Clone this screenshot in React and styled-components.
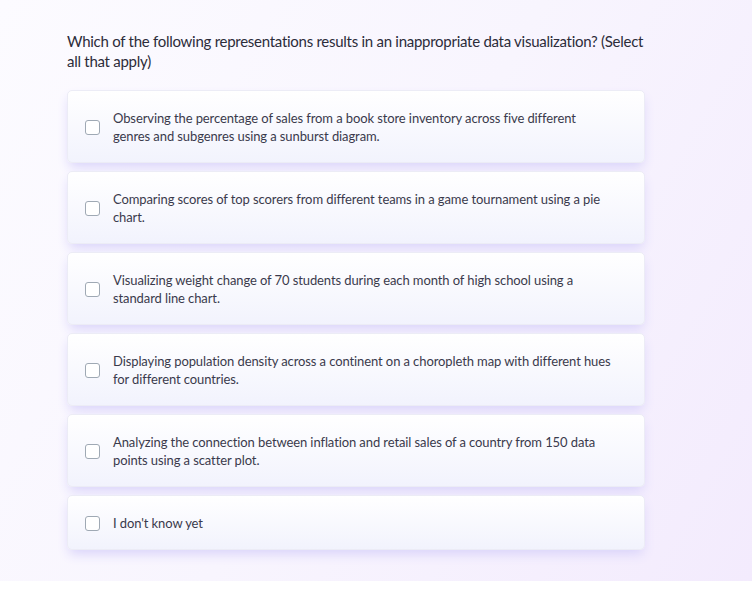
import React, { useState } from 'react'
import styled, { createGlobalStyle } from 'styled-components'

const GlobalStyle = createGlobalStyle`
  html, body {
    margin: 0;
    padding: 0;
    background: #fff;
  }
  body {
    font-family: Lato, "Noto Sans", sans-serif;
  }
`

const options = [
  'Observing the percentage of sales from a book store inventory across five different genres and subgenres using a sunburst diagram.',
  'Comparing scores of top scorers from different teams in a game tournament using a pie chart.',
  'Visualizing weight change of 70 students during each month of high school using a standard line chart.',
  'Displaying population density across a continent on a choropleth map with different hues for different countries.',
  'Analyzing the connection between inflation and retail sales of a country from 150 data points using a scatter plot.',
  "I don't know yet"
]

export default function App () {
  const [checked, setChecked] = useState({})
  const toggle = i => setChecked(c => ({ ...c, [i]: !c[i] }))

  return (
    <Page>
      <GlobalStyle />
      <Question>
        Which of the following representations results in an inappropriate data visualization? (Select all that apply)
      </Question>
      <List>
        {options.map((text, i) => (
          <Option key={i} onClick={() => toggle(i)}>
            <Box checked={!!checked[i]} />
            <Label>{text}</Label>
          </Option>
        ))}
      </List>
    </Page>
  )
}

const Page = styled.div`
  height: 581px;
  box-sizing: border-box;
  padding: 31px 0 0 67px;
  background: linear-gradient(120deg, #fcfbff 0%, #f8f5fe 50%, #f3ebfd 100%);
`

const Question = styled.div`
  width: 584px;
  font-size: 15px;
  line-height: 20px;
  letter-spacing: -0.27px;
  color: #2c2c3a;
  margin-bottom: 19px;
`

const List = styled.div`
  width: 578px;
  display: flex;
  flex-direction: column;
  gap: 8px;
`

const Option = styled.div`
  display: flex;
  align-items: center;
  gap: 13px;
  padding: 18px 28px 17px 17px;
  border: 1px solid #ececf6;
  border-radius: 5px;
  background: linear-gradient(180deg, #ffffff 0%, #f2f3fd 100%);
  box-shadow: 0 6px 12px -2px #d9d3fa;
  cursor: pointer;
  user-select: none;
`

const Box = styled.div`
  flex: none;
  width: 13px;
  height: 13px;
  border: 1.5px solid #9fa9b4;
  border-radius: 3px;
  background: ${props => props.checked ? '#7a6cf0' : '#fff'};
`

const Label = styled.div`
  font-size: 13px;
  line-height: 18px;
  letter-spacing: -0.1px;
  color: #3a3a4c;
`
